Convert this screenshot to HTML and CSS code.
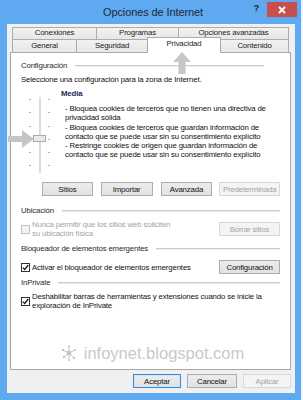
FILE: index.html
```html
<!DOCTYPE html>
<html lang="es">
<head>
    <meta charset="UTF-8">
    <meta name="viewport" content="width=device-width, initial-scale=1.0">
    <title>Opciones de Internet</title>
    <link rel="stylesheet" href="styles.css">
</head>
<body>

    <div class="window">
        <div class="titlebar">
            <span class="title">Opciones de Internet</span>
            <span class="help">?</span>
            <span class="close">
                <svg width="8" height="8" viewBox="0 0 8 8"><path d="M1 1 L7 7 M7 1 L1 7" stroke="#fff" stroke-width="1.8"/></svg>
            </span>
        </div>

        <div class="client">
            <!-- pestañas -->
            <div class="tabs">
                <div class="tab-row back">
                    <div class="tab" style="width: 85px">Conexiones</div>
                    <div class="tab" style="width: 83px">Programas</div>
                    <div class="tab" style="width: 111px">Opciones avanzadas</div>
                </div>
                <div class="tab-row front">
                    <div class="tab" style="width: 65px">General</div>
                    <div class="tab" style="width: 72px">Seguridad</div>
                    <div class="tab selected" style="width: 74px">Privacidad</div>
                    <div class="tab" style="width: 69px">Contenido</div>
                </div>
            </div>

            <div class="panel">
                <div class="group-head narrow"><span>Configuración</span><i></i></div>
                <p class="hint">Seleccione una configuración para la zona de Internet.</p>

                <div class="privacy">
                    <svg class="slider" width="28" height="84" viewBox="0 0 28 84">
                        <rect x="13" y="8" width="2" height="76" fill="#dcdcdc"/>
                        <g fill="#b4b4b4">
                            <rect x="3" y="10" width="2" height="1"/><rect x="22" y="10" width="2" height="1"/>
                            <rect x="3" y="23" width="2" height="1"/><rect x="22" y="23" width="2" height="1"/>
                            <rect x="3" y="37" width="2" height="1"/><rect x="22" y="37" width="2" height="1"/>
                            <rect x="3" y="50" width="2" height="1"/><rect x="22" y="50" width="2" height="1"/>
                            <rect x="3" y="63" width="2" height="1"/><rect x="22" y="63" width="2" height="1"/>
                            <rect x="3" y="76" width="2" height="1"/><rect x="22" y="76" width="2" height="1"/>
                        </g>
                        <rect x="7.5" y="46.5" width="12" height="6" fill="#e9e9e9" stroke="#a9a9a9"/>
                    </svg>
                    <div class="level">
                        <div class="level-name">Media</div>
                        <ul class="level-desc">
                            <li>- Bloquea cookies de terceros que no tienen una directiva de privacidad sólida</li>
                            <li>- Bloquea cookies de terceros que guardan información de contacto que se puede usar sin su consentimiento explícito</li>
                            <li>- Restringe cookies de origen que guardan información de contacto que se puede usar sin su consentimiento explícito</li>
                        </ul>
                    </div>
                </div>

                <div class="btn-row">
                    <button class="btn" style="width: 51px">Sitios</button>
                    <button class="btn" style="width: 52px">Importar</button>
                    <button class="btn" style="width: 52px">Avanzada</button>
                    <button class="btn" style="width: 61px" disabled>Predeterminada</button>
                </div>

                <div class="group-head gap-loc"><span>Ubicación</span><i></i></div>
                <div class="opt-row row-loc">
                    <label class="check disabled">
                        <span class="box"></span>
                        <span>Nunca permitir que los sitios web soliciten<br>su ubicación física</span>
                    </label>
                    <button class="btn side" disabled>Borrar sitios</button>
                </div>

                <div class="group-head gap-popup"><span>Bloqueador de elementos emergentes</span><i></i></div>
                <div class="opt-row row-popup">
                    <label class="check">
                        <span class="box"><svg width="7" height="7" viewBox="0 0 7 7"><path d="M0.8 3.6 L2.7 5.5 L6.3 1" fill="none" stroke="#1a1a1a" stroke-width="1.3"/></svg></span>
                        <span>Activar el bloqueador de elementos emergentes</span>
                    </label>
                    <button class="btn side">Configuración</button>
                </div>

                <div class="group-head gap-priv"><span>InPrivate</span><i></i></div>
                <div class="opt-row row-priv">
                    <label class="check">
                        <span class="box"><svg width="7" height="7" viewBox="0 0 7 7"><path d="M0.8 3.6 L2.7 5.5 L6.3 1" fill="none" stroke="#1a1a1a" stroke-width="1.3"/></svg></span>
                        <span>Deshabilitar barras de herramientas y extensiones cuando se inicie la<br>exploración de InPrivate</span>
                    </label>
                </div>

                <div class="watermark">
                    <svg width="16" height="16" viewBox="0 0 16 16">
                        <g stroke="#c4c4c4" stroke-width="1">
                            <path d="M8 8 L2 5 M8 8 L3 12 M8 8 L8 1.5 M8 8 L14 5 M8 8 L13 13 M8 8 L8 15"/>
                        </g>
                        <g fill="#c4c4c4">
                            <circle cx="8" cy="8" r="2.4"/>
                            <circle cx="2" cy="5" r="1.2"/><circle cx="3" cy="12" r="1.2"/>
                            <circle cx="8" cy="1.5" r="1.1"/><circle cx="14" cy="5" r="1.1"/>
                            <circle cx="13" cy="13" r="1.2"/><circle cx="8" cy="15" r="1"/>
                        </g>
                    </svg>
                    <span>infoynet.blogspot.com</span>
                </div>
            </div>

            <div class="dlg-buttons">
                <button class="btn default" style="width: 48px">Aceptar</button>
                <button class="btn" style="width: 50px">Cancelar</button>
                <button class="btn" style="width: 48px" disabled>Aplicar</button>
            </div>
        </div>

        <!-- flechas grises de la captura -->
        <svg class="arrow-up" width="18" height="22" viewBox="0 0 18 22"><path d="M9 0 L18 10 L12.5 10 L12.5 22 L5.5 22 L5.5 10 L0 10 Z" fill="#c6c6c6"/></svg>
        <svg class="arrow-right" width="26" height="18" viewBox="0 0 26 18"><path d="M26 9 L14 0 L14 6 L0 6 L0 12 L14 12 L14 18 Z" fill="#c6c6c6"/></svg>
    </div>

</body>
</html>
```

FILE: styles.css
```css
body {
    margin: 0;
    background-color: #eef3f8;
    font-family: "Liberation Sans", Arial, sans-serif;
    font-size: 7.8px;
    letter-spacing: -0.15px;
    color: #111;
    overflow: hidden;
}

/* ventana */
.window {
    position: relative;
    width: 301px;
    height: 400px;
    box-sizing: border-box;
    padding: 0 6px 7px 7px;
    background-color: #5ea9ef;
    display: flex;
    flex-direction: column;
}

.titlebar {
    height: 24px;
    display: flex;
    align-items: center;
    justify-content: center;
}

.title {
    font-size: 11px;
    letter-spacing: -0.1px;
    color: #1f2a36;
    padding-left: 4px;
}

.help {
    position: absolute;
    top: 3px;
    right: 42px;
    font-size: 9px;
    font-weight: bold;
    color: #1a1a1a;
}

.close {
    position: absolute;
    top: 2px;
    right: 4px;
    width: 30px;
    height: 15px;
    background-color: #c7504f;
    display: flex;
    align-items: center;
    justify-content: center;
}

.client {
    flex: 1;
    background-color: #f0f0f0;
    padding: 3px 4px 5px 3px;
    display: flex;
    flex-direction: column;
}

/* pestañas */
.tab-row {
    display: flex;
    align-items: flex-end;
    margin-left: 2px;
}

.tab {
    box-sizing: border-box;
    border: 1px solid #acacac;
    border-bottom: none;
    background: linear-gradient(#f2f2f2, #e7e7e7);
    text-align: center;
    color: #222;
}

.tab + .tab {
    margin-left: -1px;
}

.back .tab {
    height: 12px;
    line-height: 9px;
}

.front .tab {
    height: 13px;
    line-height: 12px;
}

.front .tab.selected {
    position: relative;
    z-index: 1;
    height: 16px;
    margin-top: -2px;
    margin-bottom: -1px;
    line-height: 12px;
    background: #fff;
}

.panel {
    flex: 1;
    background-color: #fff;
    border: 1px solid #a8a8a8;
    padding: 8px 10px 0 10px;
    display: flex;
    flex-direction: column;
}

.group-head {
    display: flex;
    align-items: center;
    gap: 8px;
    line-height: 10px;
    color: #2a2a2a;
}

.group-head i {
    flex: 1;
    height: 1px;
    background-color: #cdcdcd;
    border-bottom: 1px solid #ececec;
}

.group-head.narrow {
    margin-right: 16px;
}

.hint {
    margin: 4px 0 0 0;
    line-height: 10px;
}

.privacy {
    display: flex;
    margin-top: 4px;
}

.slider {
    margin-left: 5px;
    flex-shrink: 0;
}

.level {
    margin-left: 7px;
}

.level-name {
    font-weight: bold;
    color: #1b2a55;
    line-height: 10px;
}

.level-desc {
    list-style: none;
    margin: 5px 0 0 0;
    padding-left: 4px;
    line-height: 9.3px;
}

/* botones */
.btn {
    box-sizing: border-box;
    height: 14px;
    padding: 0;
    font-family: inherit;
    font-size: 7.8px;
    letter-spacing: -0.15px;
    color: #111;
    background: linear-gradient(#ececec, #e2e2e2);
    border: 1px solid #adadad;
    border-radius: 0;
}

.btn:disabled {
    color: #a3a3a3;
    background: #f4f4f4;
    border-color: #d9d9d9;
}

.btn.default {
    border-color: #3c8ad6;
    box-shadow: inset 0 0 0 1px #cfe6fb;
}

.btn-row {
    display: flex;
    gap: 8px;
    margin: 9px 0 0 21px;
}

.btn-row .btn:last-child {
    margin-left: -1px;
}

.btn.side {
    width: 61px;
    flex-shrink: 0;
}

.gap-loc { margin-top: 10px; }
.gap-popup { margin-top: 6px; }
.gap-priv { margin-top: 4px; }

.opt-row {
    display: flex;
    align-items: center;
    justify-content: space-between;
}

.row-loc { margin-top: 4px; }
.row-popup { margin-top: 6px; }
.row-priv { margin-top: 4px; }

.check {
    display: flex;
    align-items: center;
    line-height: 9px;
}

.box {
    box-sizing: border-box;
    width: 9px;
    height: 9px;
    margin-right: 2px;
    border: 1px solid #333;
    background-color: #fff;
    display: flex;
    align-items: center;
    justify-content: center;
    flex-shrink: 0;
}

.check.disabled {
    color: #a3a3a3;
}

.check.disabled .box {
    border-color: #c2c2c2;
    background-color: #f4f4f4;
}

/* marca de agua */
.watermark {
    margin-top: 33px;
    display: flex;
    align-items: center;
    justify-content: center;
    gap: 7px;
    padding-left: 4px;
    font-size: 16.5px;
    letter-spacing: 0;
    color: #c9c9c9;
    line-height: 20px;
}

.dlg-buttons {
    display: flex;
    justify-content: flex-end;
    gap: 6px;
    margin-top: 4px;
}

/* flechas de la captura */
.arrow-up {
    position: absolute;
    left: 173px;
    top: 52px;
    z-index: 2;
}

.arrow-right {
    position: absolute;
    left: 8px;
    top: 130px;
    z-index: 2;
}
```
